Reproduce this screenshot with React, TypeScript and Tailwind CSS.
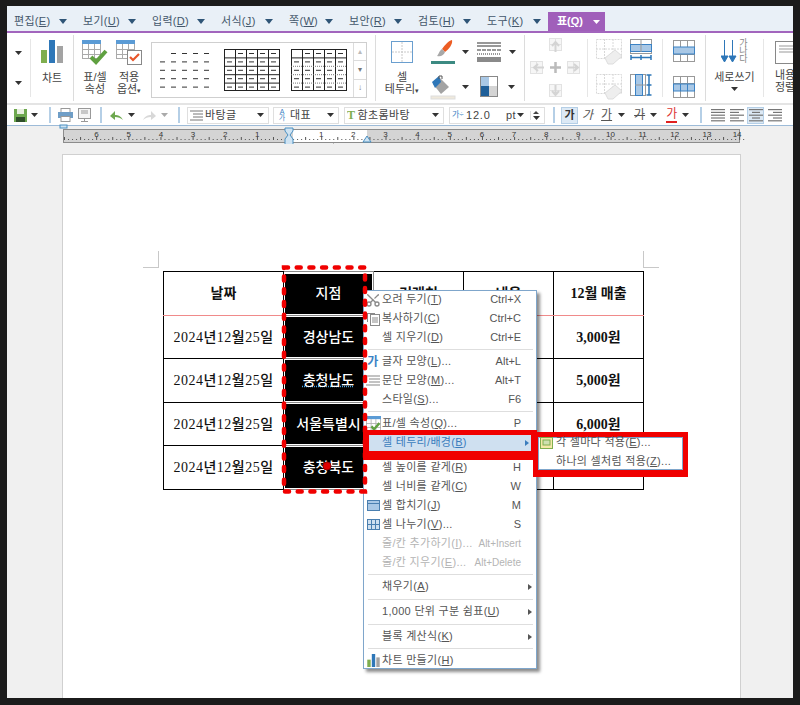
import { Scissors } from 'lucide-react'

const sans = "font-['Liberation_Sans','Noto_Sans_CJK_KR',sans-serif]"

function Caret({ white, dim }: { white?: boolean; dim?: boolean }) {
    return (
        <svg width="7" height="4" viewBox="0 0 7 4" className="shrink-0">
            <path d="M0 0h7L3.5 4z" fill={white ? '#fff' : dim ? '#aaa' : '#333'} />
        </svg>
    )
}

function Sep({ tall }: { tall?: boolean }) {
    return <div className={tall ? 'w-px shrink-0 self-center h-[66px] bg-[#dcdcdc]' : 'w-px shrink-0 self-center h-[58px] bg-[#e6e6e6]'} />
}

function BarSep() {
    return <div className="w-[2px] h-[16px] shrink-0 bg-[#b5cfe6]" />
}

function Tab({ w, label, k }: { w: string; label: string; k: string }) {
    return (
        <div className={`${w} flex items-center justify-between text-[11px] text-[#44576b] tracking-[0.3px]`}>
            <span>
                {label}(<u>{k}</u>)
            </span>
            <svg width="8" height="5" viewBox="0 0 8 5">
                <path d="M0 0h8L4 5z" fill="#2f5577" />
            </svg>
        </div>
    )
}

function ChartIcon({ small }: { small?: boolean }) {
    return (
        <svg width={small ? 13 : 22} height={small ? 13 : 23} viewBox="0 0 22 23">
            <rect x="0" y="10" width="6" height="13" fill="#7fae4f" />
            <rect x="8" y="0" width="6" height="23" fill="#2e77b8" />
            <rect x="16" y="6" width="6" height="17" fill="#a3a3a3" />
        </svg>
    )
}

function SmallTable({ head = '#5b9bd5' }: { head?: string }) {
    return (
        <>
            <rect x="0.5" y="0.5" width="18" height="18" fill="#fff" stroke="#aaa" />
            <rect x="0" y="0" width="19" height="4" fill={head} />
            <path d="M6.5 4v15M12.5 4v15M0 9.5h19M0 14.5h19" stroke="#aaa" />
        </>
    )
}

function TableCheckIcon() {
    return (
        <svg width="27" height="26" viewBox="0 0 27 26">
            <SmallTable />
            <path d="M9 17l5 5 10-11" fill="none" stroke="#5fa040" strokeWidth="4" />
        </svg>
    )
}

function TableOptionIcon() {
    return (
        <svg width="27" height="26" viewBox="0 0 27 26">
            <SmallTable />
            <rect x="11.5" y="10.5" width="14" height="14" fill="#fff" stroke="#888" />
            <path d="M14 17l3 3 6-6" fill="none" stroke="#e8562a" strokeWidth="2.2" />
        </svg>
    )
}

function Preview({ kind }: { kind: number }) {
    const rows = [0, 1, 2, 3, 4]
    const cols = [0, 1, 2, 3, 4]
    return (
        <svg width="56" height="42" viewBox="0 0 56 42">
            {kind > 0 && <rect x="0.5" y="0.5" width="55" height="41" fill="#fff" stroke="#222" />}
            {kind > 0 && cols.slice(1).map((c) => <path key={c} d={`M${c * 11 + 0.5} 0v42`} stroke="#222" />)}
            {kind > 0 &&
                rows.slice(1).map((r) => (
                    <path key={r} d={`M0 ${r * 8.4 + 0.5}h56`} stroke={kind === 2 && r > 1 ? '#777' : '#222'} strokeDasharray={kind === 2 && r > 1 ? '1 1' : undefined} />
                ))}
            {rows.map((r) =>
                cols.map((c) =>
                    r === 0 && c === 0 ? null : <rect key={`${r}-${c}`} x={c * 11 + 3} y={r * 8.4 + 4} width="5" height="1" fill="#333" />,
                ),
            )}
        </svg>
    )
}

function DisabledCross() {
    const cell = (x: number, y: number, k: string) => (
        <g key={k} stroke="#e2e2e2" fill="#f6f6f6">
            <rect x={x + 0.5} y={y + 0.5} width="12" height="12" />
            <path d={`M${x + 6.5} ${y}v13M${x} ${y + 6.5}h13`} />
        </g>
    )
    return (
        <svg width="52" height="62" viewBox="0 0 52 62">
            {cell(19, 1, 'a')}
            {cell(0, 24, 'b')}
            {cell(37, 24, 'c')}
            {cell(19, 47, 'd')}
            <path d="M25.5 5v10M22 9l3.5-4 3.500 4" stroke="#d4d4d4" strokeWidth="2" fill="none" />
            <path d="M25.500 48v10M22 54l3.500 4 3.500-4" stroke="#d4d4d4" strokeWidth="2" fill="none" />
            <path d="M4 30.500h10M8 27l-4 3.500 4 3.500M38 30.500h10M44 27l4 3.500-4 3.500" stroke="#d4d4d4" strokeWidth="2" fill="none" />
            <path d="M25.500 25v11M20 30.500h11" stroke="#bbb" strokeWidth="2.500" />
        </svg>
    )
}

function EraserTable() {
    return (
        <svg width="27" height="26" viewBox="0 0 27 26">
            <g stroke="#d8d8d8" strokeDasharray="2 1" fill="none">
                <rect x="0.5" y="0.5" width="25" height="19" />
                <path d="M8.500 0v20M17 0v20M0 10h26" />
            </g>
            <path d="M9 19l10-8 7 6-9 8h-5z" fill="#eee" stroke="#ddd" />
        </svg>
    )
}

function GridIcon({ split }: { split?: boolean }) {
    return (
        <svg width="22" height="22" viewBox="0 0 22 22">
            <rect x="0.500" y="0.500" width="21" height="21" fill="#fff" stroke="#999" />
            <path d="M7.500 0v22M14.500 0v22M0 7.500h22M0 14.500h22" stroke="#999" fill="none" />
            <rect x="0.500" y={split ? 8 : 7} width="21" height="7" fill="#a9c8e6" stroke="#3b82c4" />
            {split && <path d="M7.500 8v7M14.500 8v7" stroke="#3b82c4" />}
        </svg>
    )
}

function WidthIcon() {
    return (
        <svg width="22" height="22" viewBox="0 0 22 22">
            <rect x="0.500" y="0.500" width="21" height="14" fill="#fff" stroke="#999" />
            <rect x="0.500" y="5.500" width="21" height="7" fill="#a9c8e6" stroke="#3b82c4" />
            <path d="M11 0v13" stroke="#999" />
            <path d="M1 18.500h20M1 16v5M11 16v5M21 16v5" stroke="#2e77b8" strokeWidth="1.500" fill="none" />
        </svg>
    )
}

function HeightIcon() {
    return (
        <svg width="22" height="22" viewBox="0 0 22 22">
            <rect x="0.500" y="0.500" width="15" height="21" fill="#fff" stroke="#999" />
            <rect x="5.500" y="0.500" width="7" height="21" fill="#a9c8e6" stroke="#3b82c4" />
            <path d="M5 11h11" stroke="#999" />
            <path d="M19 1v20M16.500 1h5M16.500 11h5M16.500 21h5" stroke="#2e77b8" strokeWidth="1.500" fill="none" />
        </svg>
    )
}

function Dropdown({ w, children, end }: { w: string; children: React.ReactNode; end?: React.ReactNode }) {
    return (
        <div className={`${w} h-[17px] shrink-0 border border-[#dfdfdf] flex items-center pl-[2px] pr-[4px] text-[11px] text-[#444] tracking-[0.4px]`}>
            <div className="flex-1 flex items-center gap-[2px] min-w-0 whitespace-nowrap overflow-hidden">{children}</div>
            {end ?? <Caret />}
        </div>
    )
}

function AlignIcon({ kind, on }: { kind: number; on?: boolean }) {
    const lines = [0, 1, 2, 3, 4]
    const paths: Record<number, number[][]> = {
        0: [[0, 14], [0, 14], [0, 14], [0, 14], [0, 14]],
        1: [[0, 14], [0, 9], [0, 14], [0, 9], [0, 14]],
        2: [[0, 14], [3, 11], [0, 14], [3, 11], [0, 14]],
        3: [[0, 14], [5, 14], [0, 14], [5, 14], [0, 14]],
    }
    return (
        <div className={on ? 'w-[17px] h-[17px] flex items-center justify-center bg-[#dce9f5] border border-[#b5cfe6]' : 'w-[17px] h-[17px] flex items-center justify-center'}>
            <svg width="14" height="13" viewBox="0 0 14 13">
                {lines.map((l) => (
                    <rect key={l} x={paths[kind][l][0]} y={l * 2.800} width={paths[kind][l][1] - paths[kind][l][0]} height="1.200" fill="#777" />
                ))}
            </svg>
        </div>
    )
}

function Ruler() {
    const unit = 32.15
    const zero = 226
    const ticks = Array.from({ length: 170 }, (_, i) => i)
    return (
        <svg width="678" height="17" viewBox="0 0 678 17" className="block overflow-visible">
            <rect x="-3" y="-3" width="7" height="3" fill="#cfe3f2" stroke="#4a90c2" />
            <rect x="0.500" y="1.500" width="676" height="13" fill="#d4d4d4" stroke="#8c8c8c" />
            <rect x="230" y="2" width="74" height="12" fill="#fff" />
            {ticks.map((i) => {
                const x = 1 + i * (unit / 8)
                return <rect key={i} x={x} y={i % 4 === 0 ? 9 : 11} width="1" height={i % 4 === 0 ? 3 : 1} fill="#555" />
            })}
            {[6, 5, 4, 3, 2, 1].map((n) => (
                <text key={`l${n}`} x={zero - n * unit + 0.500} y="9" fontSize="8" textAnchor="middle" fill="#333" fontFamily="Liberation Sans">
                    {n}
                </text>
            ))}
            {[1, 2, 3, 4, 5, 6, 7, 8, 9, 10, 11, 12, 13, 14].map((n) => (
                <text key={n} x={zero + n * unit - (n === 14 ? 2 : 0)} y="9" fontSize="8" textAnchor="middle" fill="#333" fontFamily="Liberation Sans">
                    {n}
                </text>
            ))}
            <rect x="270" y="15" width="1" height="2" fill="#bbb" />
            <path d="M222 0h8v3l-3 4 3 4v6h-8v-6l3-4-3-4z" fill="#cfe3f2" stroke="#4a90c2" />
            <path d="M304 8l4 6h-8z" fill="#cfe3f2" stroke="#4a90c2" />
        </svg>
    )
}

function Row({ icon, label, k, tail, short, dim, arrow }: { icon?: React.ReactNode; label: string; k: string; tail?: string; short?: string; dim?: boolean; arrow?: boolean }) {
    return (
        <div className={`h-[19px] flex items-center text-[11px] tracking-[0.3px] ${dim ? 'text-[#b4b4b4]' : 'text-[#555]'}`}>
            <div className="w-[18px] shrink-0 flex justify-center">{icon}</div>
            <span className="flex-1 whitespace-nowrap">
                {label}(<u>{k}</u>){tail}
            </span>
            {short && <span className={dim ? 'pr-[15px] text-[10px] tracking-normal' : 'pr-[15px] text-[11px] tracking-normal'}>{short}</span>}
            {arrow && (
                <svg width="4" height="6" viewBox="0 0 4 6" className="mr-[4px]">
                    <path d="M0 0l4 3-4 3z" fill="#555" />
                </svg>
            )}
        </div>
    )
}

function MenuSep({ wide }: { wide?: boolean }) {
    return (
        <div className={`${wide ? 'h-[6px]' : 'h-[5px]'} flex items-center pl-[4px] pr-[3px]`}>
            <div className="h-px w-full bg-[#dedede]" />
        </div>
    )
}

const grayStroke = { fill: 'none', stroke: '#8a8a8a' }

function ContextMenu() {
    return (
        <div className={`absolute left-[363px] top-[290px] w-[174px] h-[379px] bg-white border border-[#7fa6cb] shadow-[3px_3px_3px_rgba(0,0,0,0.45)] ${sans}`}>
            <div className="-mt-px">
                <Row icon={<Scissors size={16} className="text-[#8a8a8a] -rotate-90" />} label="오려 두기" k="T" short="Ctrl+X" />
                <Row
                    icon={
                        <svg width="14" height="14" viewBox="0 0 14 14" {...grayStroke}>
                            <rect x="4.500" y="2.500" width="9" height="11" fill="#fff" />
                            <path d="M2 1.500h7M1.500 1v9M6 6h6M6 8h6M6 10h6" />
                        </svg>
                    }
                    label="복사하기"
                    k="C"
                    short="Ctrl+C"
                />
                <Row label="셀 지우기" k="D" short="Ctrl+E" />
                <MenuSep />
                <Row icon={<span className="text-[12px] font-bold text-[#3b82c4]">가</span>} label="글자 모양" k="L" tail="..." short="Alt+L" />
                <Row
                    icon={
                        <svg width="14" height="12" viewBox="0 0 14 12">
                            <path d="M0 1h14M3 4h11M3 7h11M0 10h14" stroke="#888" strokeWidth="1.200" />
                        </svg>
                    }
                    label="문단 모양"
                    k="M"
                    tail="..."
                    short="Alt+T"
                />
                <Row label="스타일" k="S" tail="..." short="F6" />
                <MenuSep />
                <Row
                    icon={
                        <svg width="15" height="15" viewBox="0 0 19 19">
                            <SmallTable />
                            <path d="M7 13l3 4 7-8" fill="none" stroke="#5fa040" strokeWidth="3" />
                        </svg>
                    }
                    label="표/셀 속성"
                    k="Q"
                    tail="..."
                    short="P"
                />
                <div className="h-[19px] flex items-center bg-[#cfe0f0] text-[11px] tracking-[0.3px] text-[#3b7dbd]">
                    <div className="w-[18px] shrink-0" />
                    <span className="flex-1">
                        셀 테두리/배경(<u>B</u>)
                    </span>
                    <svg width="4" height="6" viewBox="0 0 4 6" className="mr-[7px]">
                        <path d="M0 0l4 3-4 3z" fill="#3b7dbd" />
                    </svg>
                </div>
                <MenuSep wide />
                <Row label="셀 높이를 같게" k="R" short="H" />
                <Row label="셀 너비를 같게" k="C" short="W" />
                <Row
                    icon={
                        <svg width="13" height="11" viewBox="0 0 13 11">
                            <rect x="0.500" y="0.500" width="12" height="10" fill="#a9c8e6" stroke="#4a7fb0" />
                            <path d="M0 3.500h13" stroke="#4a7fb0" />
                        </svg>
                    }
                    label="셀 합치기"
                    k="J"
                    short="M"
                />
                <Row
                    icon={
                        <svg width="13" height="11" viewBox="0 0 13 11">
                            <rect x="0.500" y="0.500" width="12" height="10" fill="#cfe0f0" stroke="#4a7fb0" />
                            <path d="M4.500 0v11M8.500 0v11M0 5.500h13" stroke="#4a7fb0" />
                        </svg>
                    }
                    label="셀 나누기"
                    k="V"
                    tail="..."
                    short="S"
                />
                <Row dim label="줄/칸 추가하기" k="I" tail="..." short="Alt+Insert" />
                <Row dim label="줄/칸 지우기" k="E" tail="..." short="Alt+Delete" />
                <MenuSep />
                <Row label="채우기" k="A" arrow />
                <MenuSep wide />
                <Row label="1,000 단위 구분 쉼표" k="U" arrow />
                <MenuSep wide />
                <Row label="블록 계산식" k="K" arrow />
                <MenuSep />
                <Row icon={<ChartIcon small />} label="차트 만들기" k="H" />
            </div>
        </div>
    )
}

function Cell({ children, bold }: { children: React.ReactNode; bold?: boolean }) {
    return <td className={`border border-black text-center whitespace-nowrap ${bold ? 'font-bold' : 'font-medium tracking-[0.5px]'}`}>{children}</td>
}

function Selected({ children, h }: { children: React.ReactNode; h: string }) {
    return (
        <td className="border border-[#8a8a8a] p-[1px]">
            <div className={`${h} flex items-center justify-center bg-black text-white font-medium whitespace-nowrap`}>{children}</div>
        </td>
    )
}

const rows = [
    { place: '경상남도', sales: '3,000원', tr: 'h-[43px]', h: 'h-[40px]' },
    { place: '충청남도', sales: '5,000원', tr: 'h-[44px]', h: 'h-[41px]', dotted: true },
    { place: '서울특별시', sales: '6,000원', tr: 'h-[43px]', h: 'h-[40px]' },
    { place: '충청북도', sales: '7,000원', tr: 'h-[44px]', h: 'h-[41px]' },
]

function Doc() {
    return (
        <div className="flex-1 bg-[#f0f0f0] overflow-hidden pl-[55px] pt-[10px]">
            <div className="relative w-[679px] h-[600px] bg-white border border-[#d0d0d0] pl-[100px] pt-[116px]">
                <div className="absolute left-[80px] top-[96px] w-[16px] h-[17px] border-r border-b border-[#c8c8c8]" />
                <div className="absolute left-[580px] top-[96px] w-[16px] h-[17px] border-l border-b border-[#c8c8c8]" />
                <table className="w-[480px] table-fixed border-collapse text-[14px] text-[#111] font-['Liberation_Serif','Noto_Sans_CJK_KR',serif]">
                    <colgroup>
                        <col className="w-[120px]" />
                        <col className="w-[90px]" />
                        <col className="w-[90px]" />
                        <col className="w-[90px]" />
                        <col className="w-[90px]" />
                    </colgroup>
                    <tbody>
                        <tr className="h-[44px]">
                            <td className="border border-black border-b-[#f08a8a] border-b-dotted text-center font-bold">날짜</td>
                            <Selected h="h-[40px]">지점</Selected>
                            <td className="border border-black border-b-[#f08a8a] border-b-dotted text-center font-bold">거래처</td>
                            <td className="border border-black border-b-[#f08a8a] border-b-dotted text-center font-bold">내용</td>
                            <td className="border border-black border-b-[#f08a8a] border-b-dotted text-center font-bold">12월 매출</td>
                        </tr>
                        {rows.map((r) => (
                            <tr key={r.place} className={r.tr}>
                                <Cell>2024년12월25일</Cell>
                                <Selected h={r.h}>
                                    <span className={r.dotted ? 'underline decoration-dotted decoration-[#4aa3df]' : ''}>{r.place}</span>
                                </Selected>
                                <Cell>&nbsp;</Cell>
                                <Cell>&nbsp;</Cell>
                                <Cell bold>{r.sales}</Cell>
                            </tr>
                        ))}
                    </tbody>
                </table>
            </div>
        </div>
    )
}

export default function App() {
    return (
        <div className={`relative w-[800px] h-[705px] overflow-hidden bg-[#1b1b1b] pl-[7px] pr-[7px] pt-[6px] pb-[7px] ${sans}`}>
            <div className="h-full flex flex-col">
                {/* menu tabs */}
                <div className="h-[27px] shrink-0 flex bg-[#e9f0f7] pl-[7px] pt-[6px] border-b-2 border-[#a265bd]">
                    <Tab w="w-[69px] pr-[16px]" label="편집" k="E" />
                    <Tab w="w-[69px] pr-[16px]" label="보기" k="U" />
                    <Tab w="w-[69px] pr-[16px]" label="입력" k="D" />
                    <Tab w="w-[68px] pr-[16px]" label="서식" k="J" />
                    <Tab w="w-[60px] pr-[16px]" label="쪽" k="W" />
                    <Tab w="w-[69px] pr-[16px]" label="보안" k="R" />
                    <Tab w="w-[69px] pr-[16px]" label="검토" k="H" />
                    <Tab w="w-[61px] pr-[7px]" label="도구" k="K" />
                    <div className="w-[57px] h-[19px] bg-[#a05fba] flex items-center justify-between pl-[9px] pr-[5px] text-[11px] font-bold text-white">
                        <span>
                            표(<u>Q</u>)
                        </span>
                        <Caret white />
                    </div>
                </div>

                {/* ribbon */}
                <div className="h-[72px] shrink-0 flex bg-white border-b-2 border-[#e4e4e4] text-[11px] leading-[12px] text-[#444] text-center">
                    <div className="w-[23px] flex flex-col items-end justify-between pr-[8px] pt-[18px] pb-[18px]">
                        <Caret />
                        <Caret />
                    </div>
                    <Sep />
                    <div className="w-[42px] flex flex-col items-center pt-[7px]">
                        <ChartIcon />
                        <div className="mt-[9px]">차트</div>
                    </div>
                    <Sep tall />
                    <div className="w-[77px] flex pl-[4px]">
                        <div className="w-[34px] flex flex-col items-center pt-[7px]">
                            <TableCheckIcon />
                            <div className="mt-[5px]">
                                표/셀
                                <br />
                                속성
                            </div>
                        </div>
                        <div className="w-[34px] flex flex-col items-center pt-[7px]">
                            <TableOptionIcon />
                            <div className="mt-[5px] whitespace-nowrap">
                                적용
                                <br />
                                옵션<span className="text-[7px]">▾</span>
                            </div>
                        </div>
                    </div>
                    <div className="w-[216px] h-[56px] mt-[9px] border border-[#cfcfcf] flex items-center pl-[5px] shrink-0">
                        <div className="flex gap-[11px] w-[192px] shrink-0">
                            <Preview kind={0} />
                            <Preview kind={1} />
                            <Preview kind={2} />
                        </div>
                        <div className="ml-auto w-[13px] h-full border-l border-[#dcdcdc] flex flex-col text-[8px] leading-none text-[#777]">
                            <div className="flex-1 flex items-center justify-center border-b border-[#dcdcdc] text-[#bbb]">▴</div>
                            <div className="flex-1 flex items-center justify-center border-b border-[#dcdcdc]">▾</div>
                            <div className="flex-1 flex items-center justify-center">↓</div>
                        </div>
                    </div>
                    <div className="w-[8px]" />
                    <Sep tall />
                    <div className="w-[52px] flex flex-col items-center pt-[8px]">
                        <svg width="22" height="22" viewBox="0 0 22 22">
                            <rect x="0.500" y="0.500" width="21" height="21" fill="#fff" stroke="#6a9fcf" />
                            <path d="M11 1v20M1 11h20" stroke="#c8c8c8" strokeDasharray="2 1" />
                        </svg>
                        <div className="mt-[8px] whitespace-nowrap">
                            셀
                            <br />
                            테두리<span className="text-[7px]">▾</span>
                        </div>
                    </div>
                    <div className="w-[96px] grid grid-cols-2 content-start pt-[5px] gap-y-[8px]">
                        <div className="flex items-center h-[27px] pl-[2px] gap-[6px]">
                            <svg width="26" height="26" viewBox="0 0 26 26">
                                <path d="M22 1c1 4-3 9-7 12l-3-3c3-4 6-8 10-9z" fill="#ec5d24" />
                                <path d="M12 10l3 3c-1 3-4 5-8 4 2-2 2-5 5-7z" fill="#a8a8a8" />
                                <rect x="1" y="22" width="24" height="3" fill="#3c8a82" />
                            </svg>
                            <Caret />
                        </div>
                        <div className="flex items-center h-[27px] pl-[1px] gap-[8px]">
                            <svg width="24" height="20" viewBox="0 0 24 20">
                                <path d="M0 1h24M0 4h24" stroke="#777" strokeWidth="1.500" />
                                <path d="M0 8h24" stroke="#777" strokeDasharray="4 1" strokeWidth="1.500" />
                                <path d="M0 12h24" stroke="#777" strokeDasharray="1 1" strokeWidth="1.500" />
                                <rect y="15" width="24" height="5" fill="#8a8a8a" />
                            </svg>
                            <Caret />
                        </div>
                        <div className="flex items-center h-[27px] pl-[2px] gap-[6px]">
                            <svg width="26" height="26" viewBox="0 0 26 26">
                                <path d="M10 4l9 9-8 7-8-10z" fill="#a3a3a3" />
                                <path d="M2 8l7-6 2 6-6 6z" fill="#2e77b8" />
                                <path d="M9 5V2h3v3" fill="none" stroke="#555" />
                                <rect x="1" y="22" width="24" height="3" fill="#efe9dc" stroke="#ddd" />
                            </svg>
                            <Caret />
                        </div>
                        <div className="flex items-center h-[27px] pl-[4px] gap-[10px]">
                            <svg width="18" height="21" viewBox="0 0 18 21">
                                <rect x="0" y="0" width="9" height="10" fill="#a9c8e6" />
                                <rect x="0" y="10" width="9" height="11" fill="#1f5f99" />
                                <rect x="9" y="10" width="9" height="11" fill="#d4d4d4" />
                                <rect x="0.500" y="0.500" width="17" height="20" fill="none" stroke="#888" />
                            </svg>
                            <Caret />
                        </div>
                    </div>
                    <Sep tall />
                    <div className="w-[62px] flex justify-center items-center">
                        <DisabledCross />
                    </div>
                    <Sep />
                    <div className="w-[74px] grid grid-cols-[34px_32px] content-start pt-[6px] pl-[8px] gap-y-[9px]">
                        <EraserTable />
                        <WidthIcon />
                        <EraserTable />
                        <HeightIcon />
                    </div>
                    <Sep />
                    <div className="w-[42px] flex flex-col items-center gap-[14px] pt-[7px]">
                        <GridIcon />
                        <GridIcon split />
                    </div>
                    <Sep tall />
                    <div className="w-[57px] flex flex-col items-center pt-[6px] whitespace-nowrap">
                        <div className="h-[25px] flex items-start gap-[2px]">
                            <svg width="16" height="25" viewBox="0 0 16 25">
                                <path d="M3.500 1v20M0 17l3.500 6 3.500-6zM11.500 1v20M8 17l3.500 6 3.500-6z" fill="#2e77b8" stroke="#2e77b8" />
                            </svg>
                            <div className="text-[9px] leading-[8px] text-[#888]">
                                가
                                <br />
                                나
                                <br />
                                다
                            </div>
                        </div>
                        <div className="mt-[7px]">세로쓰기</div>
                        <div className="mt-[4px]">
                            <Caret />
                        </div>
                    </div>
                    <Sep />
                    <div className="w-[29px] overflow-hidden flex flex-col items-start pl-[11px] pt-[8px] whitespace-nowrap">
                        <svg width="24" height="23" viewBox="0 0 24 23" className="shrink-0">
                            <rect x="0.500" y="0.500" width="23" height="22" fill="#fff" stroke="#888" />
                            <path d="M4 5h16M4 8h16M4 11h16" stroke="#999" />
                        </svg>
                        <div className="mt-[5px] text-left">
                            내용
                            <br />
                            정렬
                        </div>
                    </div>
                </div>

                {/* toolbar */}
                <div className="h-[21px] shrink-0 flex items-center bg-white border-b border-[#9dbbd8] text-[11px] text-[#444]">
                    <div className="w-[7px]" />
                    <svg width="13" height="13" viewBox="0 0 13 13">
                        <rect width="13" height="13" fill="#6ea84f" />
                        <rect x="3" y="0" width="7" height="5" fill="#e8efe0" />
                        <rect x="2" y="8" width="9" height="5" fill="#2f4f2a" />
                    </svg>
                    <div className="w-[4px]" />
                    <Caret />
                    <div className="w-[11px]" />
                    <BarSep />
                    <div className="w-[7px]" />
                    <svg width="15" height="14" viewBox="0 0 15 14">
                        <rect x="3" y="0.500" width="9" height="4" fill="#fff" stroke="#999" />
                        <rect x="0" y="4" width="15" height="6" fill="#6f9ec7" />
                        <rect x="3" y="8.500" width="9" height="5" fill="#fff" stroke="#999" />
                    </svg>
                    <div className="w-[5px]" />
                    <svg width="13" height="14" viewBox="0 0 13 14">
                        <rect x="0.500" y="0.500" width="12" height="10" fill="#f5f5f5" stroke="#999" />
                        <path d="M6.500 11v2M3 13.500h7M3 3h7M3 5h7" stroke="#999" />
                    </svg>
                    <div className="w-[9px]" />
                    <BarSep />
                    <div className="w-[8px]" />
                    <svg width="13" height="11" viewBox="0 0 13 11">
                        <path d="M13 10C11 6 8 5 5 5V1L0 6l5 4V7c3 0 6 1 8 3z" fill="#6ea84f" />
                    </svg>
                    <div className="w-[5px]" />
                    <Caret />
                    <div className="w-[8px]" />
                    <svg width="13" height="11" viewBox="0 0 13 11">
                        <path d="M0 10c2-4 5-5 8-5V1l5 5-5 4V7c-3 0-6 1-8 3z" fill="#d8d8d8" />
                    </svg>
                    <div className="w-[5px]" />
                    <Caret dim />
                    <div className="w-[10px]" />
                    <BarSep />
                    <div className="w-[7px]" />
                    <Dropdown w="w-[82px]">
                        <svg width="13" height="11" viewBox="0 0 13 11">
                            <path d="M0 1h13M3 4h10M3 7h10M0 10h13" stroke="#777" />
                        </svg>
                        <span>바탕글</span>
                    </Dropdown>
                    <div className="w-[4px]" />
                    <Dropdown w="w-[66px]">
                        <span className="w-[12px] flex flex-col items-center text-[7px] leading-[6px] text-[#3b82c4] tracking-normal">
                            <span>A</span>
                            <span>가</span>
                        </span>
                        <span>대표</span>
                    </Dropdown>
                    <div className="w-[5px]" />
                    <Dropdown w="w-[100px]">
                        <span className="text-[12px] font-bold text-[#7fae4f] font-['Liberation_Serif',serif] leading-none">T</span>
                        <span>함초롬바탕</span>
                    </Dropdown>
                    <div className="w-[5px]" />
                    <Dropdown
                        w="w-[96px]"
                        end={
                            <div className="flex items-center h-full gap-[6px]">
                                <Caret />
                                <div className="border-l border-[#dfdfdf] pl-[2px] flex flex-col gap-[2px]">
                                    <svg width="6" height="3" viewBox="0 0 6 3">
                                        <path d="M0 3l3-3 3 3z" fill="#444" />
                                    </svg>
                                    <Caret />
                                </div>
                            </div>
                        }
                    >
                        <span className="w-[12px] text-[8px] text-[#3b82c4] leading-none tracking-normal">가÷</span>
                        <span className="w-[38px] tracking-[0.8px]">12.0</span>
                        <span>pt</span>
                    </Dropdown>
                    <div className="w-[8px]" />
                    <BarSep />
                    <div className="w-[6px]" />
                    <div className="w-[17px] h-[17px] flex items-center justify-center bg-[#dce9f5] border border-[#b5cfe6] font-bold text-[#333]">가</div>
                    <div className="w-[4px]" />
                    <span className="italic text-[#555] text-[12px]">가</span>
                    <div className="w-[8px]" />
                    <span className="underline text-[#555] text-[12px]">가</span>
                    <div className="w-[6px]" />
                    <Caret />
                    <div className="w-[9px]" />
                    <span className="line-through text-[#555] text-[12px]">가</span>
                    <div className="w-[5px]" />
                    <Caret />
                    <div className="w-[9px]" />
                    <span className="text-[12px] text-[#d33] border-b-2 border-[#e02020] leading-[13px]">가</span>
                    <div className="w-[5px]" />
                    <Caret />
                    <div className="w-[11px]" />
                    <BarSep />
                    <div className="w-[7px]" />
                    <AlignIcon kind={0} />
                    <div className="w-[2px]" />
                    <AlignIcon kind={1} />
                    <div className="w-[2px]" />
                    <AlignIcon kind={2} on />
                    <div className="w-[2px]" />
                    <AlignIcon kind={3} />
                </div>

                {/* ruler */}
                <div className="shrink-0 h-[18px] bg-[#f0f0f0] pl-[56px] pt-[2px]">
                    <Ruler />
                </div>

                <Doc />
            </div>

            <ContextMenu />

            {/* red marks over the menu */}
            <div className="absolute left-[363px] top-[430px] w-[174px] h-[30px] border-t-[5px] border-x-[6px] border-b-[9px] border-[#f00000]" />
            <div className={`absolute left-[533px] top-[432px] w-[155px] h-[45px] border-t-[5px] border-x-[5px] border-b-[7px] border-[#f00000] bg-white shadow-[inset_0_0_0_1px_#7fa6cb] text-[11px] tracking-[0.3px] text-[#555] ${sans}`}>
                <div className="-mt-[4px] h-[19px] flex items-center gap-[3px] pl-[2px]">
                    <svg width="13" height="12" viewBox="0 0 13 12">
                        <rect x="0.500" y="0.500" width="12" height="11" fill="#f4e9a8" stroke="#7fae4f" />
                        <rect x="3" y="3" width="7" height="5" fill="#cfe0b0" stroke="#7fae4f" />
                    </svg>
                    <span>
                        각 셀마다 적용(<u>E</u>)...
                    </span>
                </div>
                <div className="h-[19px] flex items-center pl-[18px]">
                    <span>
                        하나의 셀처럼 적용(<u>Z</u>)...
                    </span>
                </div>
            </div>
            <svg width="90" height="232" viewBox="0 0 90 232" className="absolute left-[280px] top-[264px]">
                <rect x="4" y="3.500" width="81" height="224" fill="none" stroke="#f00000" strokeWidth="4.500" strokeLinecap="round" strokeDasharray="4 8.700" />
                <circle cx="47" cy="202" r="4" fill="#e00000" stroke="#900" />
            </svg>
        </div>
    )
}
